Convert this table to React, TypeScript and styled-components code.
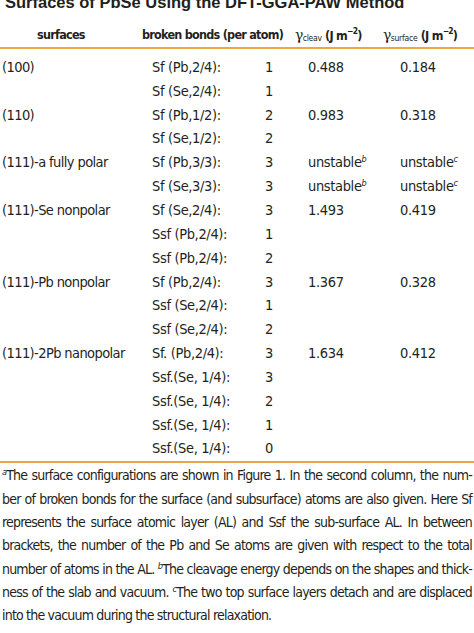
import styled, { createGlobalStyle } from 'styled-components'

const GlobalStyle = createGlobalStyle`
  html, body {
    margin: 0;
    padding: 0;
    background: #fff;
    overflow: hidden;
  }
  body {
    width: 474px;
    height: 633px;
    color: #231f20;
    font-family: "DejaVu Sans Condensed", "Liberation Sans", sans-serif;
  }
`

const ROW_H = 23.85

interface RowData {
  surface?: string
  label: string
  n: number
  cleav?: string
  cleavNote?: string
  surf?: string
  surfNote?: string
}

const rows: RowData[] = [
  { surface: '(100)', label: 'Sf (Pb,2/4):', n: 1, cleav: '0.488', surf: '0.184' },
  { label: 'Sf (Se,2/4):', n: 1 },
  { surface: '(110)', label: 'Sf (Pb,1/2):', n: 2, cleav: '0.983', surf: '0.318' },
  { label: 'Sf (Se,1/2):', n: 2 },
  { surface: '(111)-a fully polar', label: 'Sf (Pb,3/3):', n: 3, cleav: 'unstable', cleavNote: 'b', surf: 'unstable', surfNote: 'c' },
  { label: 'Sf (Se,3/3):', n: 3, cleav: 'unstable', cleavNote: 'b', surf: 'unstable', surfNote: 'c' },
  { surface: '(111)-Se nonpolar', label: 'Sf (Se,2/4):', n: 3, cleav: '1.493', surf: '0.419' },
  { label: 'Ssf (Pb,2/4):', n: 1 },
  { label: 'Ssf (Pb,2/4):', n: 2 },
  { surface: '(111)-Pb nonpolar', label: 'Sf (Pb,2/4):', n: 3, cleav: '1.367', surf: '0.328' },
  { label: 'Ssf (Se,2/4):', n: 1 },
  { label: 'Ssf (Se,2/4):', n: 2 },
  { surface: '(111)-2Pb nanopolar', label: 'Sf. (Pb,2/4):', n: 3, cleav: '1.634', surf: '0.412' },
  { label: 'Ssf.(Se, 1/4):', n: 3 },
  { label: 'Ssf.(Se, 1/4):', n: 2 },
  { label: 'Ssf.(Se, 1/4):', n: 1 },
  { label: 'Ssf.(Se, 1/4):', n: 0 },
]

export default function App() {
  return (
    <Page>
      <GlobalStyle />
      <Title>Surfaces of PbSe Using the DFT-GGA-PAW Method</Title>
      <HeaderRow>
        <HeadCell $pad={35}>surfaces</HeadCell>
        <HeadCell>broken bonds (per atom)</HeadCell>
        <HeadCell>
          <Gamma>γ</Gamma>
          <Sub>cleav</Sub> (J m<Sup>−2</Sup>)
        </HeadCell>
        <HeadCell>
          <Gamma>γ</Gamma>
          <Sub>surface</Sub> (J m<Sup>−2</Sup>)
        </HeadCell>
      </HeaderRow>
      <Body>
        {rows.map((r, i) => (
          <Row key={i}>
            <Surface>{r.surface}</Surface>
            <Cell>{r.label}</Cell>
            <Num>{r.n}</Num>
            <Cell>
              {r.cleav}
              {r.cleavNote && <Note>{r.cleavNote}</Note>}
            </Cell>
            <Cell $shift={-4}>
              {r.surf}
              {r.surfNote && <Note>{r.surfNote}</Note>}
            </Cell>
          </Row>
        ))}
      </Body>
      <Footnote>
        <Line>
          <Note>a</Note>The surface configurations are shown in Figure 1. In the second column, the num-
        </Line>
        <Line>ber of broken bonds for the surface (and subsurface) atoms are also given. Here Sf</Line>
        <Line>represents the surface atomic layer (AL) and Ssf the sub-surface AL. In between</Line>
        <Line>brackets, the number of the Pb and Se atoms are given with respect to the total</Line>
        <Line>
          number of atoms in the AL. <Note>b</Note>The cleavage energy depends on the shapes and thick-
        </Line>
        <Line>
          ness of the slab and vacuum. <Note>c</Note>The two top surface layers detach and are displaced
        </Line>
        <Line $last>into the vacuum during the structural relaxation.</Line>
      </Footnote>
    </Page>
  )
}

const Page = styled.div`
  width: 474px;
  display: flex;
  flex-direction: column;
`

const Title = styled.div`
  font-family: "Liberation Sans", Arial, sans-serif;
  font-weight: 700;
  font-size: 16.5px;
  line-height: 22px;
  margin-top: -9px;
  padding-left: 5px;
  white-space: nowrap;
`

const HeaderRow = styled.div`
  display: grid;
  grid-template-columns: 140px 153px 88px auto;
  align-items: center;
  height: 26px;
  padding: 8px 0 0 2px;
  border-bottom: 2px solid #eba646;
  white-space: nowrap;
`

const HeadCell = styled.div<{ $pad?: number }>`
  font-weight: 700;
  font-size: 12.5px;
  letter-spacing: -0.75px;
  padding-left: ${(p) => p.$pad ?? 0}px;
`

const Gamma = styled.span`
  font-family: "DejaVu Serif", serif;
  font-weight: 400;
  font-size: 14px;
`

const Sub = styled.sub`
  font-size: 8.5px;
  font-weight: 400;
  letter-spacing: -0.2px;
  vertical-align: -1px;
`

const Sup = styled.sup`
  font-size: 8.5px;
  vertical-align: 6px;
`

const Body = styled.div`
  display: flex;
  flex-direction: column;
  padding-top: 6px;
  padding-bottom: 1px;
  border-bottom: 2px solid #eba646;
`

const Row = styled.div`
  display: grid;
  grid-template-columns: 150px 111px 45px 96px auto;
  align-items: center;
  height: ${ROW_H}px;
  padding-left: 2px;
  font-size: 14.5px;
  letter-spacing: -0.35px;
  white-space: nowrap;
`

const Cell = styled.div<{ $shift?: number }>`
  margin-left: ${(p) => p.$shift ?? 0}px;
`

const Surface = styled.div`
  letter-spacing: -0.6px;
`

const Num = styled.div`
  padding-left: 2px;
`

const Note = styled.sup`
  font-style: italic;
  font-size: 9px;
  vertical-align: 5px;
  line-height: 0;
`

const Footnote = styled.div`
  padding: 1px 2px 0;
  font-size: 14px;
  letter-spacing: -0.8px;
  line-height: 23.3px;
`

const Line = styled.div<{ $last?: boolean }>`
  white-space: nowrap;
  text-align: ${(p) => (p.$last ? 'left' : 'justify')};
  text-align-last: ${(p) => (p.$last ? 'left' : 'justify')};
`
